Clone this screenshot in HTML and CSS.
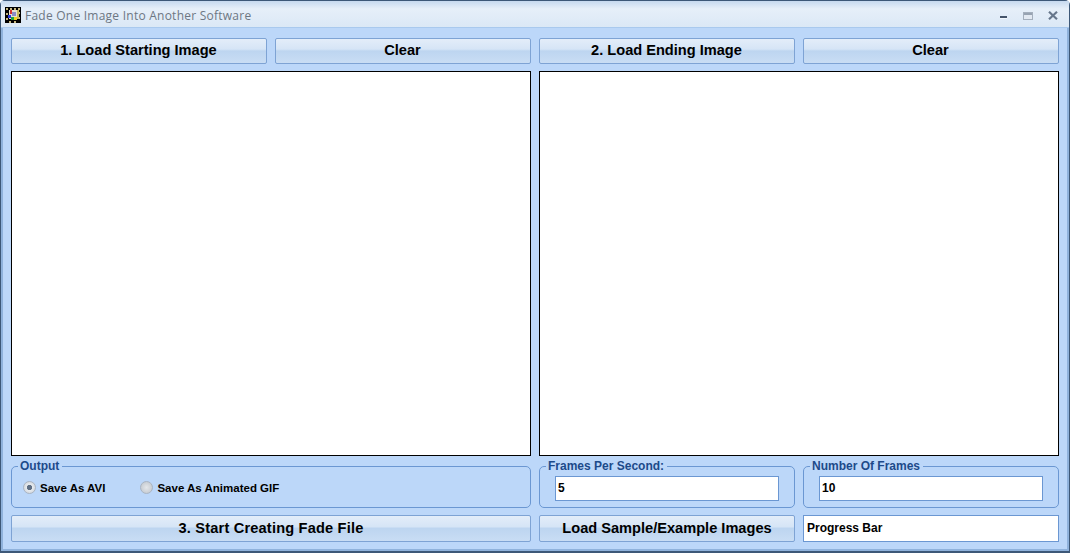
FILE: index.html
```html
<!DOCTYPE html>
<html lang="en">

<head>
    <meta charset="UTF-8">
    <title>Fade One Image Into Another Software</title>
    <link rel="stylesheet" href="styles.css">
</head>

<body>
    <div class="window">
        <div class="titlebar">
            <svg class="app-icon" width="16" height="16" viewBox="0 0 16 16" shape-rendering="crispEdges">
                <rect width="16" height="16" fill="#000" />
                <path d="M1 1h2v2H1zM5 1h2v2H5zM9 1h2v2H9zM13 1h2v2h-2zM1 6h2v2H1zM1 11h2v2H1zM13 5h2v2h-2zM13 10h2v2h-2zM4 14h2v2H4zM9 14h2v2H9z" fill="#c8b880" />
                <rect x="4" y="3" width="8" height="9" fill="#e8e0d0" />
                <rect x="5" y="3" width="2" height="4" fill="#d83030" />
                <rect x="7" y="5" width="4" height="4" fill="#8c8cc8" />
                <rect x="3" y="8" width="3" height="3" fill="#2838d8" />
                <rect x="6" y="10" width="3" height="3" fill="#20a040" />
                <rect x="9" y="10" width="3" height="3" fill="#f0d020" />
                <rect x="12" y="3" width="2" height="9" fill="#c8b860" />
            </svg>
            <span class="title-text">Fade One Image Into Another Software</span>
            <div class="window-controls">
                <svg width="9" height="4" viewBox="0 0 9 4" shape-rendering="crispEdges">
                    <rect x="1" y="0" width="7" height="2" fill="#44546a" />
                    <rect x="1" y="2" width="7" height="1" fill="#f2f7fd" />
                </svg>
                <svg width="10" height="8" viewBox="0 0 10 8" shape-rendering="crispEdges">
                    <rect x="0.5" y="0.5" width="9" height="7" fill="#e2e9f2" stroke="#a4afbd" />
                    <rect x="1" y="1" width="8" height="2" fill="#97a3b2" />
                </svg>
                <svg width="10" height="9" viewBox="0 0 10 9">
                    <path d="M1 0.8 L9 8.2 M9 0.8 L1 8.2" stroke="#66768b" stroke-width="2.2" />
                </svg>
            </div>
        </div>

        <div class="content">
            <div class="row">
                <button class="btn">1. Load Starting Image</button>
                <button class="btn">Clear</button>
                <button class="btn">2. Load Ending Image</button>
                <button class="btn">Clear</button>
            </div>

            <div class="row images">
                <div class="image-box"></div>
                <div class="image-box"></div>
            </div>

            <div class="row options">
                <fieldset class="group wide">
                    <legend>Output</legend>
                    <div class="radios">
                        <label class="radio checked"><span class="radio-dot"></span>Save As AVI</label>
                        <label class="radio"><span class="radio-dot"></span>Save As Animated GIF</label>
                    </div>
                </fieldset>
                <fieldset class="group">
                    <legend>Frames Per Second:</legend>
                    <input class="field" type="text" value="5">
                </fieldset>
                <fieldset class="group">
                    <legend>Number Of Frames</legend>
                    <input class="field" type="text" value="10">
                </fieldset>
            </div>

            <div class="row bottom">
                <button class="btn wide">3. Start Creating Fade File</button>
                <button class="btn">Load Sample/Example Images</button>
                <div class="progress">Progress Bar</div>
            </div>
        </div>
    </div>
</body>

</html>
```

FILE: styles.css
```css
* {
    box-sizing: border-box;
}

body {
    margin: 0;
    padding: 0;
    width: 1070px;
    height: 553px;
    overflow: hidden;
    font-family: "Liberation Sans", Arial, sans-serif;
}

.window {
    width: 1070px;
    height: 553px;
    display: flex;
    flex-direction: column;
    background-color: #bcd7f9;
    border: 1px solid #3d5878;
    border-bottom-width: 2px;
    border-radius: 5px 5px 0 0;
}

.titlebar {
    height: 27px;
    display: flex;
    align-items: center;
    padding: 0 11px 0 4px;
    background: linear-gradient(to bottom, #c6d9ef 0%, #e6eff9 30%, #dbe8f6 100%);
    border-bottom: 1px solid #a9c9ee;
}

.app-icon {
    margin: 1px 4px 0 0;
}

.title-text {
    padding-top: 2px;
    font-family: "Open Sans", sans-serif;
    font-size: 12px;
    letter-spacing: 0.24px;
    color: #6d7783;
}

.window-controls {
    margin: 3px 0 0 auto;
    display: flex;
    align-items: flex-end;
    gap: 15px;
}

.content {
    flex: 1;
    display: flex;
    flex-direction: column;
    padding: 10px 10px 0;
    box-shadow: inset 2px 0 #8fb2dc, inset -2px 0 #8fb2dc, inset 0 -2px #8fb2dc;
}

.row {
    display: grid;
    grid-template-columns: repeat(4, 256px);
    gap: 8px;
}

.btn {
    height: 26px;
    padding: 0 1px 2px 0;
    font-family: "Liberation Sans", Arial, sans-serif;
    font-size: 14.6px;
    font-weight: bold;
    color: #000;
    border: 1px solid #7ea3d4;
    border-radius: 2px;
    background: linear-gradient(to bottom, #e3edf9 0%, #d6e5f6 42%, #bdd5f0 50%, #c9ddf4 100%);
}

.wide {
    grid-column: span 2;
}

.images {
    grid-template-columns: repeat(2, 520px);
    margin-top: 7px;
}

.image-box {
    height: 385px;
    background-color: #fff;
    border: 1px solid #000;
}

.options {
    margin-top: 3px;
}

.group {
    height: 49px;
    min-width: 0;
    margin: 0;
    padding: 0 15px;
    border: 1px solid #6b97d2;
    border-radius: 5px;
}

.group legend {
    padding: 0 3px 0 2px;
    margin-left: -9px;
    font-size: 12px;
    font-weight: bold;
    line-height: 14px;
    color: #1d4a8a;
}

.radios {
    display: flex;
    gap: 35px;
    margin: 0 -4px;
    padding-top: 8px;
}

.radio {
    display: flex;
    align-items: center;
    gap: 4px;
    font-size: 11.5px;
    font-weight: bold;
    color: #000;
}

.radio-dot {
    width: 13px;
    height: 13px;
    border-radius: 50%;
    border: 1px solid #a9b4c2;
    background: radial-gradient(circle, #e4e7ea 0%, #c9ced4 70%, #eef1f4 100%);
}

.radio.checked .radio-dot {
    background: radial-gradient(circle, #5f6f84 0%, #5f6f84 30%, #e6eaee 38%, #c9ced4 100%);
}

.field {
    display: block;
    width: 224px;
    height: 25px;
    margin-top: 3px;
    padding: 0 2px 2px;
    font-family: "Liberation Sans", Arial, sans-serif;
    font-size: 12px;
    font-weight: bold;
    color: #000;
    background-color: #fff;
    border: 1px solid #6b97d2;
    border-radius: 0;
}

.bottom {
    margin-top: 7px;
}

.bottom .btn {
    height: 27px;
    padding-right: 0;
}

.bottom .wide {
    letter-spacing: 0.18px;
}

.progress {
    height: 27px;
    display: flex;
    align-items: center;
    padding: 0 0 1px 3px;
    font-size: 12px;
    font-weight: bold;
    background-color: #fff;
    border: 1px solid #6b97d2;
}
```
